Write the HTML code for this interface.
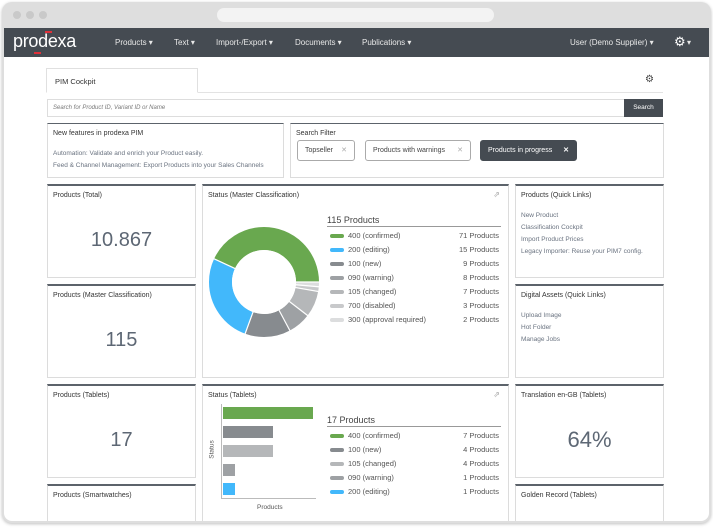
<!DOCTYPE html>
<html><head><meta charset="utf-8"><style>
*{box-sizing:border-box;margin:0;padding:0}
html,body{width:713px;height:529px;overflow:hidden}
body{background:#fff;font-family:"Liberation Sans",sans-serif;position:relative;color:#333}
.a{position:absolute}
.frame{left:2px;top:2px;width:709px;height:521px;border-radius:10px;background:#dedede;box-shadow:0 1px 3px rgba(0,0,0,.25)}
.inner{left:4px;top:57px;width:705px;height:464px;background:#fff;border-radius:0 0 8px 8px}
.nav{left:4px;top:28px;width:705px;height:29px;background:#454b52;color:#e8e8e8;font-size:8px}
.nav span{position:absolute;top:10px;white-space:nowrap}
.card{position:absolute;background:#fff;border:1px solid #dcdcdc;border-top:2px solid #5c636b}
.cut{border-bottom:none}
.t{position:absolute;left:5px;top:6px;font-size:7px;color:#333;white-space:nowrap}
.big{position:absolute;width:100%;text-align:center;font-size:20px;color:#5d6774}
.lnk{position:absolute;left:5px;font-size:6.5px;color:#6a7380;white-space:nowrap}
.lg{position:absolute;font-size:7.5px;color:#555;white-space:nowrap}
.sw{position:absolute;width:14px;height:4px;border-radius:2px}
.chip{position:absolute;top:16px;height:21px;border:1px solid #aaa;border-radius:3px;font-size:7px;padding:6px 7px;color:#444;white-space:nowrap}
.chip i{position:absolute;right:7px;top:5px;font-style:normal}
</style></head><body>
<div class="a frame"></div>
<div class="a" style="left:13px;top:11px;width:8px;height:8px;border-radius:50%;background:#c9c9c9"></div>
<div class="a" style="left:26px;top:11px;width:8px;height:8px;border-radius:50%;background:#c9c9c9"></div>
<div class="a" style="left:39px;top:11px;width:8px;height:8px;border-radius:50%;background:#c9c9c9"></div>
<div class="a" style="left:217px;top:8px;width:277px;height:14px;border-radius:7px;background:#f3f3f3"></div>
<div class="a nav">
<span style="left:9px;top:3px;font-size:18px;color:#fff;letter-spacing:-.3px">prodexa</span>
<div class="a" style="left:30px;top:24px;width:7px;height:2px;background:#e0303a"></div>
<div class="a" style="left:41px;top:3px;width:7px;height:1.5px;background:#e0303a"></div>
<span style="left:111px">Products ▾</span>
<span style="left:170px">Text ▾</span>
<span style="left:212px">Import-/Export ▾</span>
<span style="left:291px">Documents ▾</span>
<span style="left:358px">Publications ▾</span>
<span style="left:566px">User (Demo Supplier) ▾</span>
<span style="left:670px;top:6px;font-size:13px;color:#fff">⚙</span><span style="left:683px">▾</span>
</div>
<div class="a inner"></div>
<div class="a" style="left:47px;top:92px;width:616px;height:1px;background:#e3e3e3"></div>
<div class="a" style="left:46px;top:68px;width:152px;height:25px;border:1px solid #e0e0e0;border-bottom:1px solid #fff;background:#fff;font-size:7.5px;padding:8px 8px">PIM Cockpit</div>
<div class="a" style="left:645px;top:74px;font-size:10px;color:#444">⚙</div>
<div class="a" style="left:47px;top:99px;width:578px;height:18px;border:1px solid #ddd;font-size:6px;font-style:italic;color:#777;padding:5px 5px">Search for Product ID, Variant ID or Name</div>
<div class="a" style="left:624px;top:99px;width:39px;height:18px;background:#454b52;color:#fff;font-size:6.5px;text-align:center;padding-top:5px">Search</div>

<div class="card" style="left:47px;top:123px;width:237px;height:55px;border-top-width:1px;border-top-color:#5c636b">
<div class="t">New features in prodexa PIM</div>
<div class="lnk" style="top:26px">Automation: Validate and enrich your Product easily.</div>
<div class="lnk" style="top:38px">Feed &amp; Channel Management: Export Products into your Sales Channels</div></div>
<div class="card" style="left:290px;top:123px;width:374px;height:55px;border-top-width:1px">
<div class="t">Search Filter</div>
<div class="chip" style="left:6px;width:58px">Topseller <i style="color:#aaa">✕</i></div>
<div class="chip" style="left:74px;width:106px">Products with warnings <i style="color:#aaa">✕</i></div>
<div class="chip" style="left:189px;width:97px;background:#454b52;border-color:#454b52;color:#fff">Products in progress <i><b>✕</b></i></div></div>

<div class="card" style="left:47px;top:184px;width:149px;height:94px"><div class="t">Products (Total)</div><div class="big" style="top:43px">10.867</div></div>
<div class="card" style="left:47px;top:284px;width:149px;height:94px"><div class="t">Products (Master Classification)</div><div class="big" style="top:43px">115</div></div>
<div class="card" style="left:47px;top:384px;width:149px;height:94px"><div class="t">Products (Tablets)</div><div class="big" style="top:43px">17</div></div>
<div class="card cut" style="left:47px;top:484px;width:149px;height:37px"><div class="t">Products (Smartwatches)</div></div>

<div class="card" style="left:202px;top:184px;width:307px;height:194px"><div class="t">Status (Master Classification)</div><div class="a" style="right:8px;top:4px;font-size:8px;color:#aaa">⇗</div></div>
<svg class="a" style="left:204px;top:222px" width="120" height="120" viewBox="0 0 120 120">
<g transform="translate(60,60) scale(1,-1)" fill="none" stroke-width="23">
<circle r="43.5" stroke="#69a84f" stroke-dasharray="117.7 400" stroke-dashoffset="0"/>
<circle r="43.5" stroke="#42b8fb" stroke-dasharray="72.1 400" stroke-dashoffset="-117.7"/>
<circle r="43.5" stroke="#878b8f" stroke-dasharray="36.4 400" stroke-dashoffset="-189.8"/>
<circle r="43.5" stroke="#9ea1a4" stroke-dasharray="18.2 400" stroke-dashoffset="-226.2"/>
<circle r="43.5" stroke="#b5b7b9" stroke-dasharray="21.3 400" stroke-dashoffset="-244.4"/>
<circle r="43.5" stroke="#c8c9cb" stroke-dasharray="3.8 400" stroke-dashoffset="-265.7"/>
<circle r="43.5" stroke="#dcddde" stroke-dasharray="3.8 400" stroke-dashoffset="-269.5"/>
</g>
<g stroke="#fff" stroke-width="1.2" transform="translate(60,60)">
<line x1="0" y1="0" x2="56" y2="0"/>
<line x1="0" y1="0" x2="-50.7" y2="-23.6"/>
<line x1="0" y1="0" x2="-19.2" y2="52.6"/>
<line x1="0" y1="0" x2="26.3" y2="49.4"/>
<line x1="0" y1="0" x2="44.4" y2="34.1"/>
<line x1="0" y1="0" x2="55.2" y2="9.7"/>
<line x1="0" y1="0" x2="55.8" y2="4.9"/>
</g>
<circle cx="60" cy="60" r="32" fill="#fff"/>
</svg>
<div class="lg" style="left:327px;top:215px;font-size:9px;color:#444">115 Products</div>
<div class="a" style="left:327px;top:226px;width:174px;height:1px;background:#999"></div>
<div class="sw" style="left:330px;top:234px;background:#69a84f"></div><div class="lg" style="left:348px;top:231px">400 (confirmed)</div><div class="lg" style="left:440px;top:231px;width:59px;text-align:right">71 Products</div>
<div class="sw" style="left:330px;top:248px;background:#42b8fb"></div><div class="lg" style="left:348px;top:245px">200 (editing)</div><div class="lg" style="left:440px;top:245px;width:59px;text-align:right">15 Products</div>
<div class="sw" style="left:330px;top:262px;background:#878b8f"></div><div class="lg" style="left:348px;top:259px">100 (new)</div><div class="lg" style="left:440px;top:259px;width:59px;text-align:right">9 Products</div>
<div class="sw" style="left:330px;top:276px;background:#9ea1a4"></div><div class="lg" style="left:348px;top:273px">090 (warning)</div><div class="lg" style="left:440px;top:273px;width:59px;text-align:right">8 Products</div>
<div class="sw" style="left:330px;top:290px;background:#b5b7b9"></div><div class="lg" style="left:348px;top:287px">105 (changed)</div><div class="lg" style="left:440px;top:287px;width:59px;text-align:right">7 Products</div>
<div class="sw" style="left:330px;top:304px;background:#c8c9cb"></div><div class="lg" style="left:348px;top:301px">700 (disabled)</div><div class="lg" style="left:440px;top:301px;width:59px;text-align:right">3 Products</div>
<div class="sw" style="left:330px;top:318px;background:#dcddde"></div><div class="lg" style="left:348px;top:315px">300 (approval required)</div><div class="lg" style="left:440px;top:315px;width:59px;text-align:right">2 Products</div>

<div class="card cut" style="left:202px;top:384px;width:307px;height:137px"><div class="t">Status (Tablets)</div><div class="a" style="right:8px;top:4px;font-size:8px;color:#aaa">⇗</div></div>
<div class="a" style="left:221px;top:404px;width:1px;height:95px;background:#bbb"></div>
<div class="a" style="left:221px;top:498px;width:95px;height:1px;background:#bbb"></div>
<div class="a" style="left:223px;top:407px;width:90px;height:12px;background:#69a84f"></div>
<div class="a" style="left:223px;top:426px;width:50px;height:12px;background:#878b8f"></div>
<div class="a" style="left:223px;top:445px;width:50px;height:12px;background:#b5b7b9"></div>
<div class="a" style="left:223px;top:464px;width:12px;height:12px;background:#9ea1a4"></div>
<div class="a" style="left:223px;top:483px;width:12px;height:12px;background:#42b8fb"></div>
<div class="lg" style="left:257px;top:504px;font-size:6.5px">Products</div>
<div class="lg" style="left:203px;top:446px;font-size:6.5px;transform:rotate(-90deg)">Status</div>
<div class="lg" style="left:327px;top:415px;font-size:9px;color:#444">17 Products</div>
<div class="a" style="left:327px;top:426px;width:174px;height:1px;background:#999"></div>
<div class="sw" style="left:330px;top:434px;background:#69a84f"></div><div class="lg" style="left:348px;top:431px">400 (confirmed)</div><div class="lg" style="left:440px;top:431px;width:59px;text-align:right">7 Products</div>
<div class="sw" style="left:330px;top:448px;background:#878b8f"></div><div class="lg" style="left:348px;top:445px">100 (new)</div><div class="lg" style="left:440px;top:445px;width:59px;text-align:right">4 Products</div>
<div class="sw" style="left:330px;top:462px;background:#b5b7b9"></div><div class="lg" style="left:348px;top:459px">105 (changed)</div><div class="lg" style="left:440px;top:459px;width:59px;text-align:right">4 Products</div>
<div class="sw" style="left:330px;top:476px;background:#9ea1a4"></div><div class="lg" style="left:348px;top:473px">090 (warning)</div><div class="lg" style="left:440px;top:473px;width:59px;text-align:right">1 Products</div>
<div class="sw" style="left:330px;top:490px;background:#42b8fb"></div><div class="lg" style="left:348px;top:487px">200 (editing)</div><div class="lg" style="left:440px;top:487px;width:59px;text-align:right">1 Products</div>

<div class="card" style="left:515px;top:184px;width:149px;height:94px"><div class="t">Products (Quick Links)</div>
<div class="lnk" style="top:26px">New Product</div><div class="lnk" style="top:38px">Classification Cockpit</div><div class="lnk" style="top:50px">Import Product Prices</div><div class="lnk" style="top:62px">Legacy Importer: Reuse your PIM7 config.</div></div>
<div class="card" style="left:515px;top:284px;width:149px;height:94px"><div class="t">Digital Assets (Quick Links)</div>
<div class="lnk" style="top:26px">Upload Image</div><div class="lnk" style="top:38px">Hot Folder</div><div class="lnk" style="top:50px">Manage Jobs</div></div>
<div class="card" style="left:515px;top:384px;width:149px;height:94px"><div class="t">Translation en-GB (Tablets)</div><div class="big" style="top:41px;font-size:22px">64%</div></div>
<div class="card cut" style="left:515px;top:484px;width:149px;height:37px"><div class="t">Golden Record (Tablets)</div></div>
</body></html>
